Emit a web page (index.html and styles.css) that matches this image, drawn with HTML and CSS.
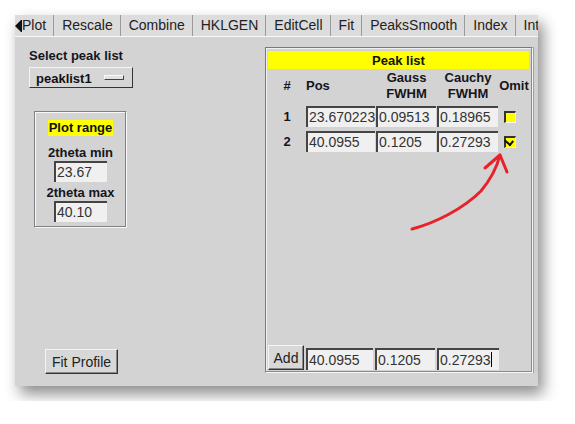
FILE: index.html
```html
<!DOCTYPE html>
<html lang="en">
<head>
  <meta charset="UTF-8">
  <title>Peaks</title>
  <link rel="stylesheet" href="styles.css">
</head>
<body>
  <div class="window">
    <div class="tabbar">
      <div class="tab tab-first"><span class="tab-arrow"></span>Plot</div>
      <div class="tab">Rescale</div>
      <div class="tab">Combine</div>
      <div class="tab">HKLGEN</div>
      <div class="tab">EditCell</div>
      <div class="tab">Fit</div>
      <div class="tab">PeaksSmooth</div>
      <div class="tab">Index</div>
      <div class="tab tab-last">Int</div>
    </div>

    <div class="content">
      <div class="left-col">
        <div class="label">Select peak list</div>
        <div class="menubutton">peaklist1 <span class="menu-ind"></span></div>

        <div class="range-box">
          <div class="range-title">Plot range</div>
          <div class="label small">2theta min</div>
          <div class="entry range-entry">23.67</div>
          <div class="label small">2theta max</div>
          <div class="entry range-entry">40.10</div>
        </div>

        <div class="spacer"></div>
        <div class="button fit-btn">Fit Profile</div>
      </div>

      <div class="peak-panel">
        <div class="panel-title">Peak list</div>
        <div class="peak-grid">
          <div class="hdr">#</div>
          <div class="hdr hdr-left">Pos</div>
          <div class="hdr">Gauss<br>FWHM</div>
          <div class="hdr">Cauchy<br>FWHM</div>
          <div class="hdr">Omit</div>

          <div class="rownum">1</div>
          <div class="entry">23.670223</div>
          <div class="entry">0.09513</div>
          <div class="entry">0.18965</div>
          <div class="check-cell"><span class="check"></span></div>

          <div class="rownum">2</div>
          <div class="entry">40.0955</div>
          <div class="entry">0.1205</div>
          <div class="entry">0.27293</div>
          <div class="check-cell"><span class="check checked"></span></div>
        </div>

        <div class="spacer"></div>

        <div class="add-row">
          <div class="button add-btn">Add</div>
          <div class="entry add-e1">40.0955</div>
          <div class="entry add-e2">0.1205</div>
          <div class="entry add-e3">0.27293<span class="caret"></span></div>
        </div>
      </div>
      <div class="scroll-strip"></div>
    </div>

    <svg class="arrow" width="523" height="371" viewBox="0 0 523 371">
      <path d="M397,214 C420,208 448,194 466,176 C476,164 482,152 485,140" fill="none" stroke="#e8222b" stroke-width="3" stroke-linecap="round"/>
      <path d="M470,153 L485,140 L492,157" fill="none" stroke="#e8222b" stroke-width="3" stroke-linecap="round" stroke-linejoin="round"/>
    </svg>
  </div>
</body>
</html>
```

FILE: styles.css
```css
* {
  margin: 0;
  padding: 0;
  box-sizing: border-box;
}

body {
  background: #ffffff;
  padding: 15px;
  font-family: 'Liberation Sans', Arial, sans-serif;
  color: #111;
}

.window {
  position: relative;
  width: 523px;
  height: 371px;
  background: #d3d3d3;
  box-shadow: 5px 8px 14px rgba(0, 0, 0, 0.45);
  display: flex;
  flex-direction: column;
}

/* tabs */
.tabbar {
  height: 22px;
  display: flex;
  background: #dcdcdc;
  border-bottom: 1px solid #f8f8f8;
  overflow: hidden;
  font-size: 14px;
  color: #222;
}

.tab {
  padding: 2px 7px 0 8px;
  border-right: 1px solid #9a9a9a;
  white-space: nowrap;
}

.tab-first {
  padding-left: 0;
  display: flex;
}

.tab-arrow {
  display: inline-block;
  width: 0;
  height: 0;
  margin-top: 3px;
  border-top: 6px solid transparent;
  border-bottom: 6px solid transparent;
  border-right: 6px solid #111;
  box-shadow: 1px 0 0 #111;
  margin-right: 1px;
}

.tab-last {
  border-right: 0;
}

/* body */
.content {
  flex: 1;
  display: flex;
  min-height: 0;
}

.left-col {
  width: 250px;
  padding: 11px 0 12px 14px;
  display: flex;
  flex-direction: column;
}

.label {
  font-weight: bold;
  font-size: 13px;
  line-height: 15px;
  color: #151520;
}

.menubutton {
  margin-top: 4px;
  width: 104px;
  height: 21px;
  background: #d6d6d6;
  border: 1px solid;
  border-color: #f4f4f4 #333 #333 #f4f4f4;
  font-weight: bold;
  font-size: 13px;
  padding: 1px 0 0 6px;
  display: flex;
  align-items: center;
  gap: 12px;
}

.menu-ind {
  display: inline-block;
  width: 20px;
  height: 5px;
  background: #e2e2e2;
  border: 1px solid;
  border-color: #fafafa #444 #444 #fafafa;
  margin-top: -2px;
}

.range-box {
  margin: 23px 0 0 5px;
  width: 93px;
  border: 1px solid;
  border-color: #808080 #f8f8f8 #f8f8f8 #808080;
  box-shadow: inset -1px -1px 0 #808080, inset 1px 1px 0 #f8f8f8;
  padding: 8px 0 2px;
  display: flex;
  flex-direction: column;
  align-items: center;
}

.range-title {
  background: #ffff00;
  font-weight: bold;
  font-size: 13px;
  line-height: 16px;
  padding: 0 1px;
  margin-bottom: 9px;
}

.entry {
  background: #f0f0f0;
  border-top: 2px solid #444;
  border-left: 2px solid #444;
  font-size: 14px;
  color: #333;
  height: 21px;
  padding: 1px 0 0 1px;
  white-space: nowrap;
  overflow: hidden;
}

.range-entry {
  width: 53px;
  margin: 1px 0 3px;
}

.spacer {
  flex: 1;
}

.button {
  background: #d8d8d8;
  border: 1px solid;
  border-color: #f4f4f4 #333 #333 #f4f4f4;
  box-shadow: inset -1px -1px 0 #888;
  font-size: 14px;
  color: #222;
  display: flex;
  align-items: center;
  justify-content: center;
}

.fit-btn {
  margin-left: 16px;
  width: 73px;
  height: 25px;
}

/* peak list */
.peak-panel {
  width: 268px;
  margin: 10px 0 13px;
  border: 1px solid;
  border-color: #7a7a7a #f6f6f6 #f6f6f6 #7a7a7a;
  box-shadow: inset -1px -1px 0 #8a8a8a, inset 1px 1px 0 #f0f0f0;
  padding: 3px 3px 2px 2px;
  display: flex;
  flex-direction: column;
}

.panel-title {
  background: #ffff00;
  text-align: center;
  font-weight: bold;
  font-size: 13px;
  height: 18px;
  padding-top: 2px;
}

.peak-grid {
  display: grid;
  grid-template-columns: 38px 70px 61px 62px 30px;
  row-gap: 4px;
  align-items: center;
}

.hdr {
  font-weight: bold;
  font-size: 13px;
  text-align: center;
  line-height: 16px;
  height: 32px;
  display: flex;
  align-items: center;
  justify-content: center;
  color: #151520;
  margin-top: 1px;
}

.hdr-left {
  justify-content: flex-start;
}

.rownum {
  font-weight: bold;
  font-size: 13px;
  text-align: center;
  color: #151520;
}

.peak-grid .entry {
  margin-right: 1px;
}

.check-cell {
  display: flex;
  align-items: center;
  padding-left: 5px;
}

.check {
  display: inline-block;
  width: 12px;
  height: 12px;
  background: #ffff00;
  border-top: 2px solid #333;
  border-left: 2px solid #333;
  border-right: 1px solid #f8f8f8;
  border-bottom: 1px solid #f8f8f8;
  position: relative;
}

.check.checked::after {
  content: '';
  position: absolute;
  left: 1px;
  top: 0px;
  width: 4px;
  height: 6px;
  border-left: 2px solid #111;
  border-bottom: 2px solid #111;
  transform: rotate(-50deg);
  transform-origin: 30% 60%;
}

.add-row {
  display: flex;
  align-items: flex-end;
  gap: 2px;
}

.add-btn {
  width: 36px;
  height: 25px;
}

.add-row .entry {
  height: 22px;
  padding-top: 2px;
}

.add-e1 { width: 67px; }
.add-e2 { width: 60px; }
.add-e3 { width: 62px; }

.caret {
  display: inline-block;
  width: 1px;
  height: 15px;
  background: #000;
  vertical-align: -2px;
}

.scroll-strip {
  width: 5px;
  margin: 10px 0 13px;
  border-left: 1px solid #a0a0a0;
  background: #cfcfcf;
}

.arrow {
  position: absolute;
  left: 0;
  top: 0;
  pointer-events: none;
}
```
